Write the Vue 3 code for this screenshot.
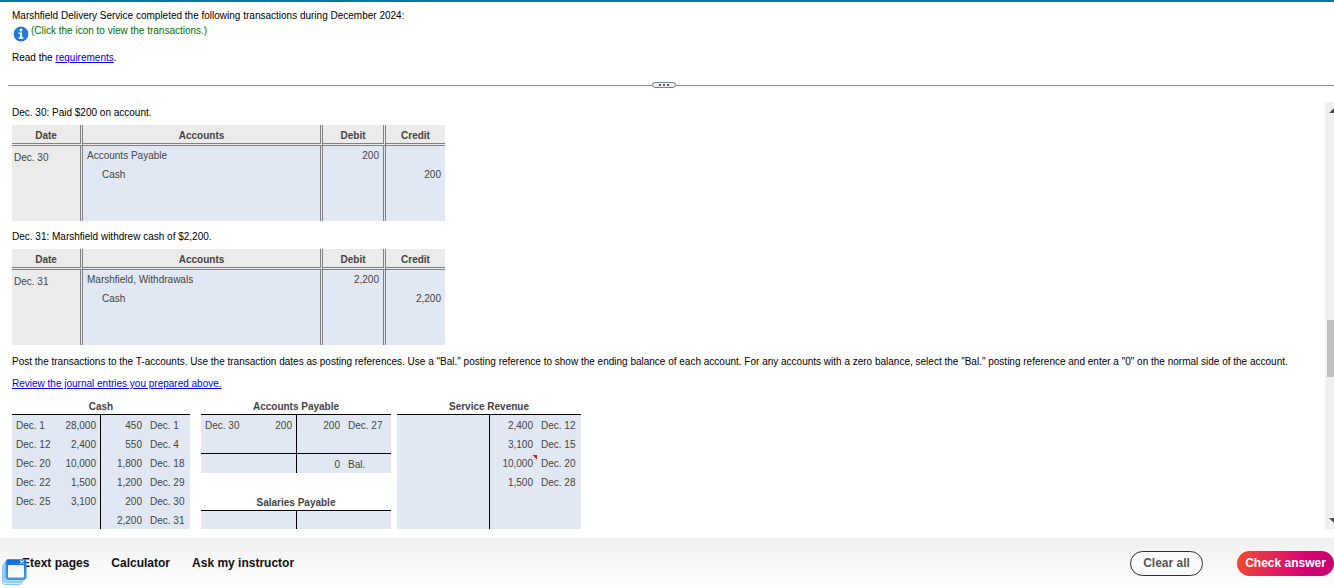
<template>
  <div class="exercise">
    <header class="question">
      <p class="line">Marshfield Delivery Service completed the following transactions during December 2024:</p>
      <p class="line hint">
        <button class="info" type="button" aria-label="View the transactions">
          <svg viewBox="0 0 16 16" width="16" height="16">
            <circle cx="8" cy="8" r="7.4" fill="#2277d8" />
            <circle cx="8" cy="4" r="1.5" fill="#fff" />
            <path d="M5.6 6.4h3.5v4.9h1.4v1.5H5.6v-1.5H7V7.9H5.6z" fill="#fff" />
          </svg>
        </button>
        <span>(Click the icon to view the transactions.)</span>
      </p>
      <p class="line read">Read the <a href="#requirements">requirements</a>.</p>
    </header>

    <div class="divider">
      <button class="handle" type="button" aria-label="Resize panels"><i></i><i></i><i></i></button>
    </div>

    <div class="work">
      <main class="answer">
        <section v-for="entry in journal" :key="entry.date" class="entry">
          <p class="line">{{ entry.text }}</p>
          <table class="journal">
            <thead>
              <tr>
                <th class="date">Date</th>
                <th class="accounts">Accounts</th>
                <th class="debit">Debit</th>
                <th class="credit">Credit</th>
              </tr>
            </thead>
            <tbody>
              <tr>
                <td class="date">{{ entry.date }}</td>
                <td class="accounts">
                  <div>{{ entry.account }}</div>
                  <div class="indent">Cash</div>
                </td>
                <td class="debit">{{ entry.amount }}</td>
                <td class="credit"><div class="second">{{ entry.amount }}</div></td>
              </tr>
            </tbody>
          </table>
        </section>

        <p class="line post">Post the transactions to the T-accounts. Use the transaction dates as posting references. Use a "Bal." posting reference to show the ending balance of each account. For any accounts with a zero balance, select the "Bal." posting reference and enter a "0" on the normal side of the account.</p>
        <p class="line review"><a href="#journal">Review the journal entries you prepared above.</a></p>

        <div class="ledger">
          <div v-for="(column, i) in ledger" :key="i" class="ledger-column" :class="'col-' + i">
            <table v-for="account in column" :key="account.name" class="t-account">
              <thead>
                <tr><th colspan="4">{{ account.name }}</th></tr>
              </thead>
              <tbody>
                <tr v-for="(row, r) in account.rows" :key="r" :class="{ total: row[3] === 'Bal.' }">
                  <td class="ref-left">{{ row[0] }}</td>
                  <td class="amount-left">{{ row[1] }}</td>
                  <td class="amount-right"><span :class="{ flagged: row[4] }">{{ row[2] }}</span></td>
                  <td class="ref-right">{{ row[3] }}</td>
                </tr>
              </tbody>
            </table>
          </div>
        </div>
      </main>

      <div class="scrollbar" aria-hidden="true">
        <svg class="arrow" viewBox="0 0 9 17"><path d="M4 11L9 6v5z" fill="#505050" /></svg>
        <div class="before"></div>
        <div class="thumb"></div>
        <div class="after"></div>
        <svg class="arrow" viewBox="0 0 9 17"><path d="M4 6h5v5z" fill="#505050" /></svg>
      </div>
    </div>

    <footer class="toolbar">
      <nav class="tools">
        <a href="#etext">Etext pages</a>
        <a href="#calculator">Calculator</a>
        <a href="#instructor">Ask my instructor</a>
      </nav>
      <button class="clear" type="button">Clear all</button>
      <button class="check" type="button">Check answer</button>
      <svg class="windows" viewBox="0 0 26 29" width="26" height="29">
        <defs>
          <linearGradient id="bar" x1="0" y1="0" x2="0" y2="1">
            <stop offset="0" stop-color="#1268d8" />
            <stop offset="1" stop-color="#3fa0f5" />
          </linearGradient>
          <linearGradient id="pane" x1="0" y1="0" x2="0" y2="1">
            <stop offset="0" stop-color="#f0f0f0" />
            <stop offset="1" stop-color="#ffffff" />
          </linearGradient>
        </defs>
        <rect x="1.5" y="6.5" width="19" height="20" rx="2" fill="#d5e9fb" stroke="#8fc3f2" />
        <rect x="3" y="4.5" width="19" height="19.5" rx="2" fill="#bcdffb" stroke="#6fb4ee" />
        <rect x="5" y="1.5" width="20" height="20" rx="2" fill="url(#bar)" stroke="#3b93e6" />
        <rect x="7" y="7" width="16" height="12.5" rx="1" fill="url(#pane)" />
        <path d="M19 2.5l4 3M23 2.5l-4 3" stroke="#e6f2ff" stroke-width="1.2" />
      </svg>
    </footer>
  </div>
</template>

<script setup>
const journal = [
  { date: 'Dec. 30', text: 'Dec. 30: Paid $200 on account.', account: 'Accounts Payable', amount: '200' },
  { date: 'Dec. 31', text: 'Dec. 31: Marshfield withdrew cash of $2,200.', account: 'Marshfield, Withdrawals', amount: '2,200' },
];

// row: left ref, left amount, right amount, right ref, flagged
const ledger = [
  [
    {
      name: 'Cash',
      rows: [
        ['Dec. 1', '28,000', '450', 'Dec. 1'],
        ['Dec. 12', '2,400', '550', 'Dec. 4'],
        ['Dec. 20', '10,000', '1,800', 'Dec. 18'],
        ['Dec. 22', '1,500', '1,200', 'Dec. 29'],
        ['Dec. 25', '3,100', '200', 'Dec. 30'],
        ['', '', '2,200', 'Dec. 31'],
      ],
    },
  ],
  [
    {
      name: 'Accounts Payable',
      rows: [
        ['Dec. 30', '200', '200', 'Dec. 27'],
        ['', '', '', ''],
        ['', '', '0', 'Bal.'],
      ],
    },
    { name: 'Salaries Payable', rows: [['', '', '', ''], ['', '', '', '']] },
  ],
  [
    {
      name: 'Service Revenue',
      rows: [
        ['', '', '2,400', 'Dec. 12'],
        ['', '', '3,100', 'Dec. 15'],
        ['', '', '10,000', 'Dec. 20', true],
        ['', '', '1,500', 'Dec. 28'],
        ['', '', '', ''],
        ['', '', '', ''],
      ],
    },
  ],
];
</script>

<style>
body {
  background: #fff;
}
</style>

<style scoped>
.exercise {
  display: flex;
  flex-direction: column;
  box-sizing: border-box;
  height: 100vh;
  border-top: 2px solid #007a9c;
  overflow: hidden;
  font-family: "Liberation Sans", Arial, sans-serif;
  font-size: 10px;
  color: #000;
}

.line {
  margin: 0;
  line-height: 16px;
}

a {
  color: #0000ee;
}

button {
  font-family: inherit;
  padding: 0;
  cursor: pointer;
}

.question {
  padding: 6px 12px 0;
}

.hint {
  display: flex;
  gap: 2px;
  padding-left: 1px;
  height: 18px;
  color: #007000;
  line-height: 14px;
}

.info {
  width: 16px;
  height: 18px;
  padding-top: 2px;
  border: 0;
  background: none;
}

.read {
  margin-top: 8px;
}

.divider {
  display: flex;
  align-items: center;
  justify-content: center;
  height: 8px;
  margin: 15px 0 0 8px;
  padding-right: 14px;
  background: linear-gradient(#8090a4, #8090a4) center / 100% 1px no-repeat;
}

.handle {
  display: flex;
  align-items: center;
  justify-content: center;
  gap: 2px;
  width: 24px;
  height: 6px;
  box-sizing: border-box;
  border: 1px solid #708090;
  border-radius: 3px;
  background: #f4f4f4;
}

.handle i {
  width: 2px;
  height: 2px;
  background: #555;
}

.work {
  display: flex;
  flex: 1;
  min-height: 0;
  margin: 13px 0 9px;
}

.answer {
  flex: 1;
  min-width: 0;
  overflow: hidden;
  padding: 3px 12px 0;
}

.entry {
  margin-bottom: 8px;
}

.entry .line {
  margin-bottom: 4px;
}

.journal {
  border-spacing: 0;
  table-layout: fixed;
  width: 433px;
  color: #444;
}

.journal th {
  height: 16px;
  padding: 2px 0 0;
  border-bottom: 3px double #808080;
  background: #ebebeb;
}

.journal td {
  height: 71px;
  padding: 0 4px 4px;
  background: #e1e8f3;
  line-height: 19px;
  vertical-align: top;
}

.journal .date,
.journal .accounts,
.journal .debit {
  border-right: 3px double #808080;
}

.journal .date {
  width: 68px;
}

.journal th.accounts {
  width: 237px;
}

.journal th.debit {
  width: 60px;
}

.journal td.date {
  width: auto;
  padding: 2px 2px;
  background: #ebebeb;
}

td.debit,
td.credit {
  text-align: right;
}

.indent {
  padding-left: 15px;
}

.second {
  padding-top: 19px;
}

.post {
  padding-top: 1px;
  white-space: nowrap;
}

.review {
  margin-top: 6px;
}

.ledger {
  display: flex;
  align-items: flex-start;
  margin-top: 7px;
}

.ledger-column {
  display: flex;
  flex-direction: column;
  gap: 22px;
}

.t-account {
  border-spacing: 0;
  color: #444;
}

.t-account th {
  height: 15px;
  padding: 0;
  border-bottom: 1px solid #000;
}

.t-account td {
  box-sizing: border-box;
  height: 19px;
  padding: 1px 0 0;
  background: #e1e8f3;
  white-space: nowrap;
}

.t-account .total td {
  height: 20px;
  border-top: 1px solid #000;
}

.t-account .ref-left {
  width: 45px;
  padding-left: 4px;
}

.t-account .amount-left {
  width: 44px;
  padding-right: 4px;
  border-right: 1px solid #000;
  text-align: right;
}

.t-account .amount-right {
  width: 43px;
  text-align: right;
}

.t-account .ref-right {
  width: 48px;
  padding-left: 8px;
}

.col-0 .amount-right {
  width: 41px;
}

.col-1 {
  margin: 0 6px 0 11px;
}

.col-1 .amount-left {
  width: 51px;
}

.col-1 .ref-right {
  width: 51px;
}

.col-2 .amount-left {
  width: 48px;
}

.flagged {
  position: relative;
}

.flagged::after {
  content: "";
  position: absolute;
  top: -3px;
  right: -4px;
  width: 5px;
  height: 5px;
  background: #c01f26;
  clip-path: polygon(0 0, 100% 0, 100% 100%);
}

.scrollbar {
  display: flex;
  flex-direction: column;
  width: 9px;
  background: #f0f0f0;
}

.arrow {
  width: 9px;
  height: 17px;
}

.before {
  flex: 201;
}

.thumb {
  flex: 57;
  margin-left: 2px;
  background: #c1c1c1;
}

.after {
  flex: 135;
}

.toolbar {
  position: relative;
  display: flex;
  align-items: center;
  height: 50px;
  background: linear-gradient(#f0f0f0, #fff);
  font-size: 12px;
  font-weight: bold;
}

.tools {
  display: flex;
  flex: 1;
  gap: 22px;
  padding-left: 22px;
}

.tools a {
  color: #111;
  text-decoration: none;
}

.clear,
.check {
  height: 25px;
  border-radius: 13px;
  font-size: 12px;
  font-weight: bold;
}

.clear {
  width: 73px;
  margin-right: 34px;
  border: 1px solid #252f43;
  background: #fafafa;
  color: #555;
}

.check {
  width: 97px;
  border: 0;
  background: linear-gradient(110deg, #f0502f, #db0473 65%, #c2006f);
  color: #fff;
}

.windows {
  position: absolute;
  left: 1px;
  top: 20px;
}
</style>
